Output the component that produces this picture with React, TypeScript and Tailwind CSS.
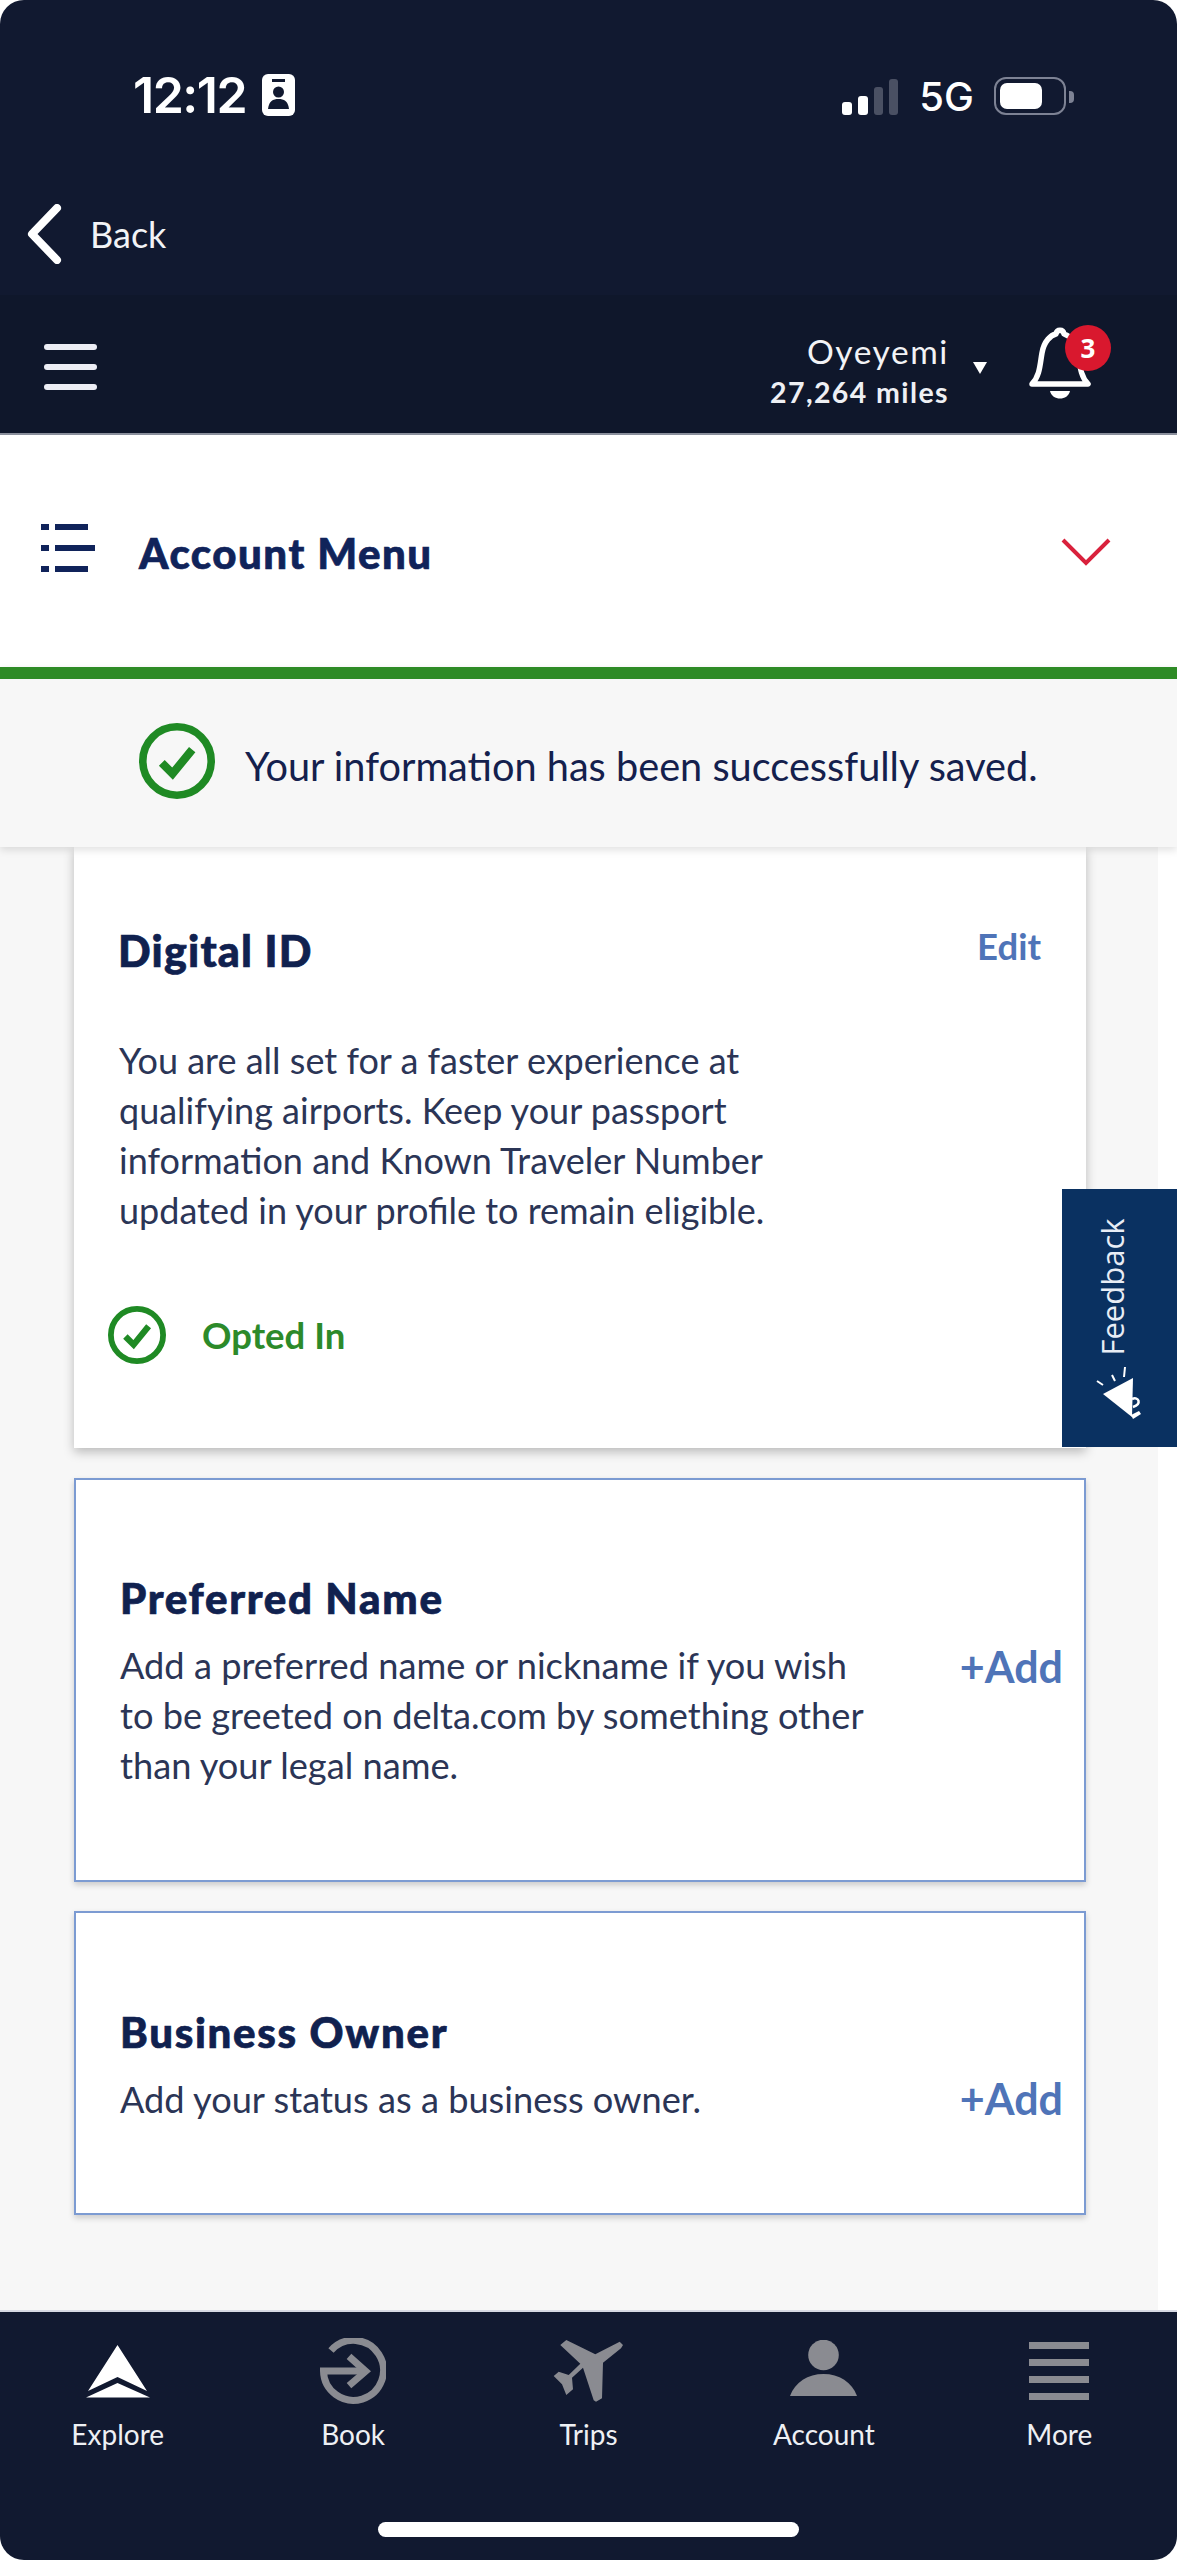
import React from "react";

const Check = ({ size, sw }: { size: number; sw: number }) => (
  <svg width={size} height={size} viewBox="0 0 60 60" fill="none" className="shrink-0">
    <circle cx="30" cy="30" r={30 - sw / 2} stroke="#1f8a24" strokeWidth={sw} />
    <path d="M18 31.500 L26.500 40 L42 21" stroke="#1f8a24" strokeWidth="6.500" />
  </svg>
);

const NavItem = ({ label, children }: { label: string; children: React.ReactNode }) => (
  <div className="flex flex-col items-center">
    <div className="h-[72px] flex items-center justify-center">{children}</div>
    <div className="mt-[9px] text-[28px] leading-[36px] text-[#eef0f4]">{label}</div>
  </div>
);

const AddCard = ({ title, lines, h, pt, addTop }: { title: string; lines: string[]; h: string; pt: string; addTop: string }) => (
  <div className={`ml-[74px] w-[1012px] ${h} ${pt} border-2 border-[#7c9bd2] bg-white shadow-[0_3px_6px_rgba(0,0,0,0.18)] pl-[44px] pr-[21px] flex justify-between items-start`}>
    <div>
      <div className="text-[42px] leading-[50px] font-black tracking-[1.700px] text-[#10214f] [-webkit-text-stroke:0.7px_#10214f]">{title}</div>
      <div className="mt-[17px] text-[36.200px] leading-[50px] text-[#2b3556]">
        {lines.map((l) => (
          <div key={l}>{l}</div>
        ))}
      </div>
    </div>
    <div className={`${addTop} text-[43px] leading-[50px] font-bold text-[#4f74b8]`}>+Add</div>
  </div>
);

export default function App() {
  return (
    <div className="w-[1177px] h-[2560px] bg-white">
      <div className="relative w-[1177px] h-[2560px] overflow-hidden rounded-[24px] bg-white flex flex-col font-['Lato',sans-serif]">
        {/* status + back */}
        <div className="h-[295px] bg-[#111930] shrink-0 flex flex-col">
          <div className="h-[190px] flex items-start">
            <div className="ml-[133px] mt-[68px] flex items-center gap-[16px]">
              <span className="font-['Inter',sans-serif] text-[50px] leading-[54px] font-semibold tracking-[-1.5px] text-white">12:12</span>
              <svg width="33" height="42" viewBox="0 0 33 42">
                <rect width="33" height="42" rx="6" fill="#fff" />
                <rect x="10" y="5" width="13" height="3" fill="#111930" />
                <circle cx="16.500" cy="18" r="5.500" fill="#111930" />
                <path d="M6 35c1-8 5-10 10.500-10S26 27 27 35z" fill="#111930" />
              </svg>
            </div>
            <div className="ml-auto mt-[77px] flex items-end">
              <div className="flex items-end gap-[6px] h-[36px]">
                <div className="w-[10px] h-[13px] rounded-[3px] bg-white" />
                <div className="w-[10px] h-[19px] rounded-[3px] bg-white" />
                <div className="w-[9px] h-[28px] rounded-[3px] bg-[#4a5063]" />
                <div className="w-[9px] h-[36px] rounded-[3px] bg-[#4a5063]" />
              </div>
              <span className="ml-[21px] font-['Inter',sans-serif] text-[40px] leading-[36px] font-medium text-white">5G</span>
              <div className="ml-[20px] mr-[111px] relative w-[72px] h-[38px] rounded-[12px] border-2 border-[#7d8294] p-[4px]">
                <div className="w-[42px] h-[26px] rounded-[7px] bg-white" />
                <div className="absolute left-[73px] top-[12px] w-[5px] h-[12px] rounded-r-[4px] bg-[#7d8294]" />
              </div>
            </div>
          </div>
          <div className="flex items-center h-[90px]">
            <svg width="36" height="60" viewBox="0 0 36 60" fill="none" className="ml-[26px] mt-[-2px]">
              <path d="M31 4 L6 30 L31 56" stroke="#fff" strokeWidth="8" strokeLinecap="round" strokeLinejoin="round" />
            </svg>
            <span className="ml-[28px] text-[36px] leading-[46px] text-[#f2f3f6] mt-[-2px]">Back</span>
          </div>
        </div>
        {/* header */}
        <div className="h-[140px] shrink-0 bg-[#0f172b] border-b-2 border-[#8a8f9c] flex items-center relative">
          <div className="ml-[44px] flex flex-col gap-[14px] mt-[6px]">
            <div className="w-[53px] h-[6px] rounded-full bg-[#eceef5]" />
            <div className="w-[53px] h-[6px] rounded-full bg-[#eceef5]" />
            <div className="w-[53px] h-[6px] rounded-full bg-[#eceef5]" />
          </div>
          <div className="ml-auto flex flex-col items-end mt-[14px]">
            <div className="text-[33.500px] leading-[42px] tracking-[1.6px] text-[#f2f3f6]">Oyeyemi</div>
            <div className="text-[28.500px] leading-[40px] font-bold tracking-[1.4px] text-[#eef0f4]">27,264 miles</div>
          </div>
          <svg width="14" height="12" viewBox="0 0 14 12" className="ml-[24px] mt-[8px]">
            <path d="M0 0H14L7 12z" fill="#fff" />
          </svg>
          <svg width="62" height="76" viewBox="0 0 62 76" fill="none" className="ml-[42px] mr-[86px] mt-[-1px]">
            <path d="M3 58 C11 50 11 38 13 27 C15 15 22 9 27 8 C28 3 34 3 35 8 C41 10 47 15 49 27 C51 38 51 50 59 58 Z" stroke="#fff" strokeWidth="5.500" strokeLinejoin="round" />
            <path d="M21 65 H41 C39 75 23 75 21 65Z" fill="#fff" />
          </svg>
          <div className="absolute left-[1065px] top-[30px] w-[46px] h-[46px] rounded-full bg-[#d9182e] flex items-center justify-center text-[26px] font-bold text-white font-['Open_Sans',sans-serif]">3</div>
        </div>
        {/* account menu */}
        <div className="h-[232px] shrink-0 bg-white flex items-center">
          <svg width="54" height="48" viewBox="0 0 54 48" className="ml-[41px] mt-[-6px]">
            <g fill="#10235a">
              <rect x="0" y="0" width="8" height="6" />
              <rect x="14" y="0" width="33" height="6" />
              <rect x="0" y="21" width="8" height="6" />
              <rect x="14" y="21" width="40" height="6" />
              <rect x="0" y="42" width="8" height="6" />
              <rect x="14" y="42" width="33" height="6" />
            </g>
          </svg>
          <div className="ml-[44px] text-[42px] leading-[50px] font-black tracking-[1.500px] text-[#10235a] [-webkit-text-stroke:0.7px_#10235a] mt-[4px]">Account Menu</div>
          <svg width="50" height="28" viewBox="0 0 50 28" fill="none" className="ml-auto mr-[66px] mt-[2px]">
            <path d="M2 2 L25 25 L48 2" stroke="#d9213c" strokeWidth="4" />
          </svg>
        </div>
        {/* banner */}
        <div className="h-[180px] shrink-0 border-t-[12px] border-[#2e8b26] bg-[#f7f7f7] shadow-[0_3px_8px_rgba(0,0,0,0.12)] z-10 flex items-center pl-[139px]">
          <div className="mt-[-4px]"><Check size={76} sw={6} /></div>
          <div className="ml-[30px] text-[39.700px] leading-[50px] text-[#14204d] mt-[5px] whitespace-nowrap">Your information has been successfully saved.</div>
        </div>
        {/* main */}
        <div className="flex-1 w-[1158px] bg-[#f7f7f7] flex flex-col">
          <div className="ml-[74px] w-[1012px] h-[601px] shrink-0 bg-white shadow-[0_4px_10px_rgba(0,0,0,0.25)] relative pl-[44px] pr-[45px] pt-[79px]">
            <div className="flex justify-between items-start">
              <div className="text-[43px] leading-[50px] font-black tracking-[1.200px] text-[#10214f] [-webkit-text-stroke:0.7px_#10214f]">Digital ID</div>
              <div className="mt-[-2px] text-[36.500px] leading-[44px] font-bold text-[#4f74b8]">Edit</div>
            </div>
            <div className="mt-[59px] ml-[1px] text-[36px] leading-[50px] text-[#2b3556]">
              <div>You are all set for a faster experience at</div>
              <div>qualifying airports. Keep your passport</div>
              <div>information and Known Traveler Number</div>
              <div>updated in your profile to remain eligible.</div>
            </div>
            <div className="mt-[71px] ml-[-10px] flex items-center gap-[36px]">
              <Check size={58} sw={6} />
              <span className="text-[36.500px] leading-[44px] font-bold text-[#2c8a2a]">Opted In</span>
            </div>
          </div>
          <div className="h-[30px] shrink-0" />
          <AddCard
            title="Preferred Name"
            lines={["Add a preferred name or nickname if you wish", "to be greeted on delta.com by something other", "than your legal name."]}
            h="h-[404px]"
            pt="pt-[93px]"
            addTop="mt-[69px]"
          />
          <div className="h-[29px] shrink-0" />
          <AddCard
            title="Business Owner"
            lines={["Add your status as a business owner."]}
            h="h-[304px]"
            pt="pt-[94px]"
            addTop="mt-[67px]"
          />
        </div>
        {/* nav */}
        <div className="h-[250px] shrink-0 bg-[#111930] border-t-2 border-[#d7d9e4] relative pt-[23px]">
          <div className="grid grid-cols-5">
            <NavItem label="Explore">
              <svg width="64" height="53" viewBox="0 0 64 53">
                <path d="M31.500 0 L61 46 L31.500 32 L2 46Z" fill="#fff" />
                <path d="M31.500 38 L64 52.500 H0Z" fill="#fff" />
              </svg>
            </NavItem>
            <NavItem label="Book">
              <svg width="66" height="67" viewBox="0 0 66 67" fill="none" stroke="#8a8b91" strokeWidth="7">
                <path d="M11 12.500 A30 30 0 1 1 3.500 33 H46" />
                <path d="M29 18.300 L45.700 33.300 L29 47.700" />
              </svg>
            </NavItem>
            <NavItem label="Trips">
              <svg width="70" height="62" viewBox="0 0 70 62">
                <path d="M66.700 1.700 L70 5 L68 8.300 L50 22.700 L49 58.300 L43 61.700 L40.700 60.300 L30 27.700 L19 37.700 L20 49.300 L13.300 55 L9 44.300 L0.700 36 L5.700 31.700 L15.700 35 L27.300 23.700 L7.300 5 L13.300 0 L42.300 14.300 Z" fill="#8a8b91" />
              </svg>
            </NavItem>
            <NavItem label="Account">
              <svg width="67" height="56" viewBox="0 0 67 56" className="mt-[-6px]">
                <circle cx="33.500" cy="15" r="15.300" fill="#8a8b91" />
                <path d="M0 56 C5 42 18 34 33.500 34 C49 34 62 42 67 56Z" fill="#8a8b91" />
              </svg>
            </NavItem>
            <NavItem label="More">
              <div className="flex flex-col gap-[10px]">
                <div className="w-[60px] h-[7px] bg-[#8a8b91]" />
                <div className="w-[60px] h-[7px] bg-[#8a8b91]" />
                <div className="w-[60px] h-[7px] bg-[#8a8b91]" />
                <div className="w-[60px] h-[7px] bg-[#8a8b91]" />
              </div>
            </NavItem>
          </div>
          <div className="absolute left-[378px] top-[210px] w-[421px] h-[15px] rounded-full bg-white" />
        </div>
        {/* feedback overlay */}
        <div className="absolute left-[1062px] top-[1189px] w-[115px] h-[258px] bg-[#0a3161]">
          <div className="h-[140px] mt-[28px] flex items-center justify-center">
            <span className="block -rotate-90 whitespace-nowrap text-[31px] leading-[36px] text-[#e8edf5] font-['Open_Sans',sans-serif] mr-[16px]">Feedback</span>
          </div>
          <svg width="50" height="56" viewBox="0 0 50 56" className="ml-[33px] mt-[8px]" fill="none">
            <path d="M2 16 L8 20 M17 10 L20 16 M30 2 L29 12" stroke="#fff" strokeWidth="2" />
            <path d="M8 29 L38 13 L37 52 Z" fill="#fff" />
            <path d="M37 34 C44 31 47 39 38 42" stroke="#fff" strokeWidth="2.500" />
            <path d="M36 50 L44 46 L46 49 L38 54 Z" fill="#fff" />
          </svg>
        </div>
      </div>
    </div>
  );
}
